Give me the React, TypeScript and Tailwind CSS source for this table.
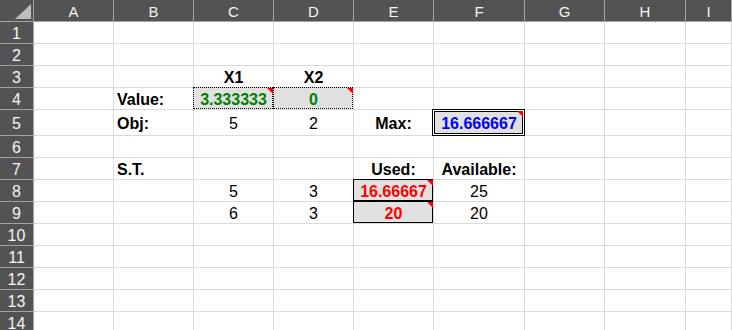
import React from 'react';

type Tone = 'green' | 'blue' | 'red';
type Frame = 'dotted' | 'double' | 'solid';

interface CellSpec {
  text: string;
  bold?: boolean;
  left?: boolean;
  tone?: Tone;
  frame?: Frame;
  note?: boolean;
}

const COLS = ['A', 'B', 'C', 'D', 'E', 'F', 'G', 'H', 'I'];
const ROWS = Array.from({ length: 14 }, (_, i) => i + 1);

const SHEET: Record<string, CellSpec> = {
  C3: { text: 'X1', bold: true },
  D3: { text: 'X2', bold: true },
  B4: { text: 'Value:', bold: true, left: true },
  C4: { text: '3.333333', bold: true, tone: 'green', frame: 'dotted', note: true },
  D4: { text: '0', bold: true, tone: 'green', frame: 'dotted', note: true },
  B5: { text: 'Obj:', bold: true, left: true },
  C5: { text: '5' },
  D5: { text: '2' },
  E5: { text: 'Max:', bold: true },
  F5: { text: '16.666667', bold: true, tone: 'blue', frame: 'double', note: true },
  B7: { text: 'S.T.', bold: true, left: true },
  E7: { text: 'Used:', bold: true },
  F7: { text: 'Available:', bold: true },
  C8: { text: '5' },
  D8: { text: '3' },
  E8: { text: '16.66667', bold: true, tone: 'red', frame: 'solid', note: true },
  F8: { text: '25' },
  C9: { text: '6' },
  D9: { text: '3' },
  E9: { text: '20', bold: true, tone: 'red', frame: 'solid', note: true },
  F9: { text: '20' },
};

const toneClass: Record<Tone, string> = {
  green: 'text-[#008000]',
  blue: 'text-[#0000ff]',
  red: 'text-[#ff0000]',
};

// red comment indicator in the corner of a cell
function NoteMark({ inset }: { inset?: boolean }) {
  return (
    <span
      className={[
        'absolute z-20 h-0 w-0 border-l-[6px] border-l-transparent border-t-[6px] border-t-[#ff0000]',
        inset ? 'top-px right-px' : 'top-0 right-0',
      ].join(' ')}
    />
  );
}

function CellFrame({ frame }: { frame: Frame }) {
  if (frame === 'double') {
    return (
      <div className="absolute -left-[2px] -top-px -right-px -bottom-px z-0 border border-black bg-white p-px">
        <div className="h-full w-full border border-black bg-[#e1e1e1]" />
      </div>
    );
  }
  if (frame === 'dotted') {
    return <div className="absolute -left-px -top-px right-0 bottom-0 z-0 border border-dotted border-black bg-[#e1e1e1] bg-clip-padding" />;
  }
  return <div className="absolute -left-px -top-px right-0 bottom-0 z-0 border border-black bg-[#e1e1e1] bg-clip-padding" />;
}

function Cell({ spec }: { spec?: CellSpec }) {
  return (
    <div className="relative flex items-center border-r border-b border-[#dadada] bg-white pt-[2px]">
      {spec?.frame && <CellFrame frame={spec.frame} />}
      {spec && (
        <span
          className={[
            'relative z-10 w-full leading-[18px] whitespace-nowrap',
            spec.left ? 'pl-[3px] text-left' : 'text-center',
            spec.bold ? 'font-bold' : 'font-normal',
            spec.tone ? toneClass[spec.tone] : 'text-black',
          ].join(' ')}
        >
          {spec.text}
        </span>
      )}
      {spec?.note && <NoteMark inset={spec.frame === 'double'} />}
    </div>
  );
}

export default function App() {
  return (
    <div className="h-[330px] w-[732px] overflow-hidden bg-white font-['Liberation_Sans',Arial,sans-serif] text-[16px]">
      <div className="grid grid-cols-[34px_80px_80px_80px_80px_80px_91px_80px_81px_1fr] grid-rows-[22px_repeat(4,22px)_26px_repeat(9,22px)]">
        {/* select-all corner */}
        <div className="relative border-r border-b border-[#a3a3a3] bg-[#535353]">
          <svg width="33" height="21" className="absolute top-0 left-0">
            <polygon points="31,4 31,19 15,19" fill="#bdbdbd" />
          </svg>
        </div>
        {COLS.map((c) => (
          <div
            key={c}
            className="flex items-center justify-center border-r border-b border-[#a3a3a3] bg-[#535353] pt-[2px] text-[15px] leading-[18px] text-[#f4f4f4]"
          >
            {c}
          </div>
        ))}

        {ROWS.map((r) => (
          <React.Fragment key={r}>
            <div className="flex items-center justify-center border-r border-b border-[#a3a3a3] bg-[#535353] pt-[2px] text-[16px] leading-[18px] text-[#f4f4f4]">
              {r}
            </div>
            {COLS.map((c) => (
              <Cell key={c + r} spec={SHEET[c + r]} />
            ))}
          </React.Fragment>
        ))}
      </div>
    </div>
  );
}
